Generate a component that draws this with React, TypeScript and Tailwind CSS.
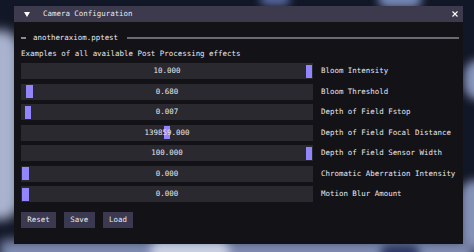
import React from "react";

const rows = [
  { v: "10.000", label: "Bloom Intensity", pos: 1 },
  { v: "0.680", label: "Bloom Threshold", pos: 0.015 },
  { v: "0.007", label: "Depth of Field Fstop", pos: 0.01 },
  { v: "139859.000", label: "Depth of Field Focal Distance", pos: 0.5 },
  { v: "100.000", label: "Depth of Field Sensor Width", pos: 1 },
  { v: "0.000", label: "Chromatic Aberration Intensity", pos: 0 },
  { v: "0.000", label: "Motion Blur Amount", pos: 0 },
];

function Slider({ v, pos }: { v: string; pos: number }) {
  return (
    <div className="relative w-[292px] h-[16px] bg-[#2a292f] flex items-center justify-center">
      <div
        className="absolute top-[1.5px] w-[6.5px] h-[13px] bg-[#9385fb]"
        style={{ left: `${1 + pos * (292 - 8.5)}px` }}
      />
      <span className="relative text-[#e8e8ec]">{v}</span>
    </div>
  );
}

export default function App() {
  return (
    <div
      className="relative w-[474px] h-[252px] overflow-hidden bg-[#121727]"
      style={{ fontFamily: '"DejaVu Sans Mono", "Liberation Mono", monospace' }}
    >
      {/* blurred background scene */}
      <div className="absolute left-[-20px] top-[30px] w-[40px] h-[190px] bg-[#a9b3cf] blur-[6px] rounded-full" />
      <div className="absolute left-[378px] top-[-10px] w-[44px] h-[18px] bg-[#7587b6] blur-[4px] rounded-full" />
      <div className="absolute left-[260px] top-[-8px] w-[30px] h-[14px] bg-[#55669a] blur-[4px] rounded-full" />
      <div className="absolute left-[464px] top-[60px] w-[30px] h-[40px] bg-[#8a97bd] blur-[5px] rounded-full" />
      <div className="absolute left-[460px] top-[180px] w-[30px] h-[70px] bg-[#8592b8] blur-[5px] rounded-full" />
      <div className="absolute left-[0px] top-[240px] w-[474px] h-[30px] bg-[#7f8cb2] blur-[6px]" />
      <div className="absolute left-[150px] top-[242px] w-[80px] h-[20px] bg-[#c9d0e2] blur-[5px] rounded-full" />
      <div className="absolute left-[380px] top-[244px] w-[40px] h-[20px] bg-[#2e3960] blur-[4px] rounded-full" />

      <div className="relative ml-[14px] mt-[6px] w-[449px] h-[238px] bg-[#131217] flex flex-col text-[7.45px] leading-none text-[#e8e8ec]">
        {/* title bar */}
        <div className="h-[16px] bg-[#3c3a4c] flex items-center relative">
          <svg className="absolute left-[10px] top-[5.5px]" width="6" height="5" viewBox="0 0 6 5">
            <polygon points="0,0 6,0 3,5" fill="#ffffff" />
          </svg>
          <span className="ml-[29px]">Camera Configuration</span>
          <svg className="absolute left-[438px] top-[5px]" width="6" height="6" viewBox="0 0 6 6">
            <path d="M0.5 0.5 L5.5 5.5 M5.5 0.5 L0.5 5.5" stroke="#ffffff" strokeWidth="1.1" />
          </svg>
        </div>

        <div className="flex flex-col pl-[7px] pt-[10px]">
          {/* separator */}
          <div className="h-[12px] flex items-center">
            <div className="w-[5px] h-[1.5px] bg-[#8a8a94]" />
            <span className="ml-[7px]">anotheraxiom.pptest</span>
            <div className="ml-[9px] w-[332px] h-[1.5px] bg-[#6a6a72]" />
          </div>
          <div className="h-[10px] mt-[5px] flex items-center">Examples of all available Post Processing effects</div>

          <div className="flex flex-col gap-[4.5px] mt-[4px]">
            {rows.map((r, i) => (
              <div key={i} className="flex items-center">
                <Slider v={r.v} pos={r.pos} />
                <span className="ml-[8px]">{r.label}</span>
              </div>
            ))}
          </div>

          <div className="flex gap-[8px] mt-[10px]">
            <div className="h-[16px] px-[6.3px] bg-[#3a3950] flex items-center">Reset</div>
            <div className="h-[16px] px-[6.3px] bg-[#3a3950] flex items-center">Save</div>
            <div className="h-[16px] px-[6.5px] bg-[#3a3950] flex items-center">Load</div>
          </div>
        </div>
      </div>
    </div>
  );
}
